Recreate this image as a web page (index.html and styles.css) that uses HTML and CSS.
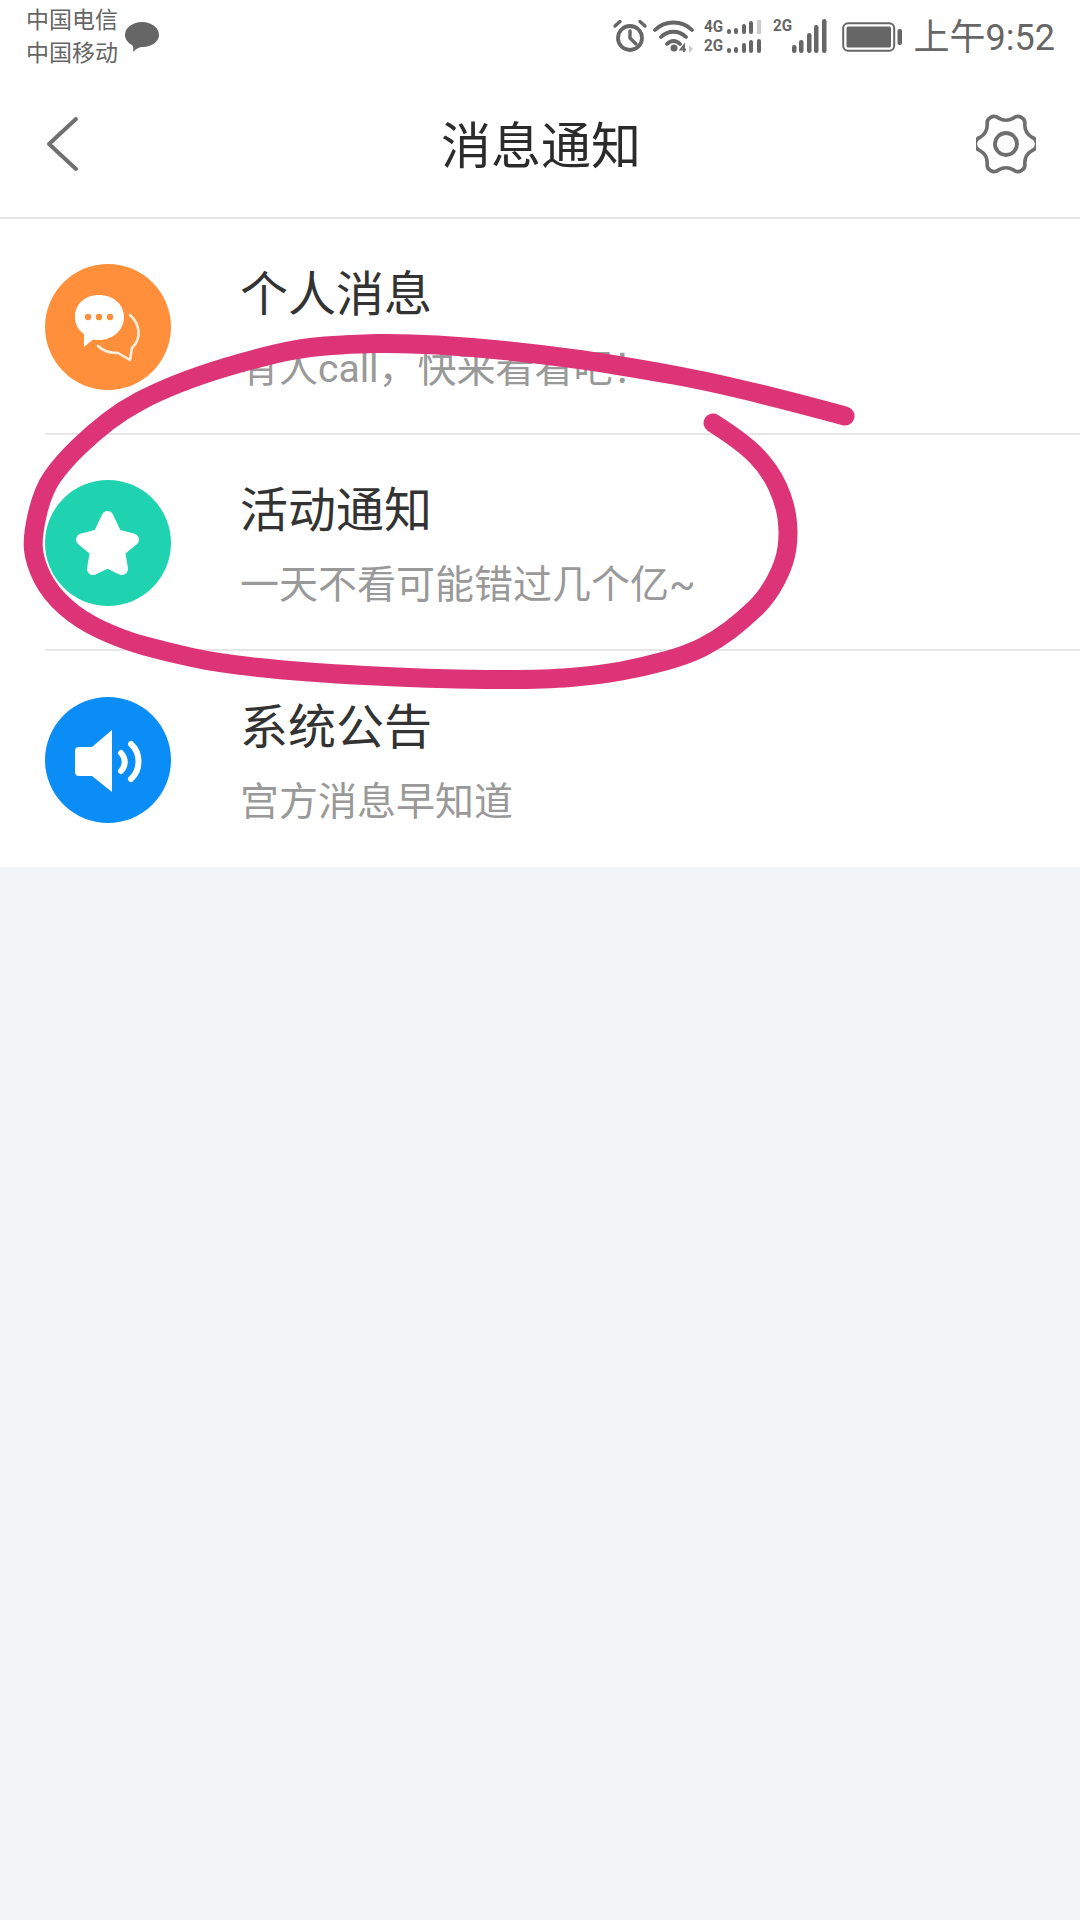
FILE: index.html
```html
<!DOCTYPE html>
<html lang="zh">
<head>
<meta charset="utf-8">
<title>消息通知</title>
<link rel="stylesheet" href="styles.css">
</head>
<body>
<div class="page">
  <header class="status">
    <div class="carrier">
      <div class="carrier-names"><div>中国电信</div><div>中国移动</div></div>
      <svg class="bubble" viewBox="0 0 34 32"><path d="M17 1C26 1 34 6.500 34 14C34 21 26 26 18 26C15 26 12 27 8 31C8.500 27 8.500 25 7 24C3 22 0 18 0 14C0 6.500 8 1 17 1Z"/></svg>
    </div>
    <div class="indicators">
      <svg class="alarm" viewBox="0 0 36 36"><circle cx="18" cy="19" r="12" fill="none" stroke="#666" stroke-width="3.800"/><path d="M18 12V19L24 25M3 7L8 2.500M33 7L28 2.500" fill="none" stroke="#666" stroke-width="3.400" stroke-linecap="round"/></svg>
      <svg class="wifi" viewBox="0 0 42 36"><path d="M2 11C12 1 29 1 39 11M8 18C15 11 26 11 33 18M14 25C18 21 23 21 27 25" fill="none" stroke="#666" stroke-width="3.800" stroke-linecap="round"/><circle cx="21" cy="29" r="3.500" fill="#666"/><path d="M31 33V26L27.500 30.500H33" fill="none" stroke="#666" stroke-width="1.800"/><path d="M36 26L40 30H36ZM36 34L40 30H36Z" fill="#ccc"/></svg>
      <div class="sim-dual">
        <div class="sim-row"><span class="net">4G</span><svg class="bars" viewBox="0 0 36 14"><rect x="1" y="9" width="4" height="5" rx="2" fill="#666"/><rect x="8" y="8" width="4" height="6" rx="2" fill="#666"/><rect x="16" y="4" width="4" height="10" rx="2" fill="#666"/><rect x="23" y="1" width="4" height="13" rx="2" fill="#666"/><rect x="31" y="0" width="4" height="14" fill="#ccc"/></svg></div>
        <div class="sim-row"><span class="net">2G</span><svg class="bars" viewBox="0 0 36 14"><rect x="1" y="9" width="4" height="5" rx="2" fill="#666"/><rect x="8" y="8" width="4" height="6" rx="2" fill="#666"/><rect x="16" y="4" width="4" height="10" rx="2" fill="#666"/><rect x="23" y="1" width="4" height="13" rx="2" fill="#666"/><rect x="31" y="0" width="4" height="14" rx="2" fill="#666"/></svg></div>
      </div>
      <div class="sim-single"><span class="net">2G</span><svg class="bars-big" viewBox="0 0 36 34"><rect x="0" y="26" width="4.500" height="8" rx="2.200" fill="#666"/><rect x="7" y="21" width="4.500" height="13" rx="2.200" fill="#666"/><rect x="15" y="14" width="4.500" height="20" rx="2.200" fill="#666"/><rect x="22" y="6" width="4.500" height="28" rx="2.200" fill="#666"/><rect x="30" y="0" width="4.500" height="34" rx="2.200" fill="#666"/></svg></div>
      <svg class="battery" viewBox="0 0 61 30"><rect x="1.200" y="1.200" width="51" height="27.600" rx="5" fill="none" stroke="#666" stroke-width="2"/><rect x="4.500" y="4.500" width="44.500" height="21" rx="1.500" fill="#666"/><rect x="55.500" y="7" width="4.500" height="16" rx="2" fill="#666"/></svg>
      <span class="time">上午9:52</span>
    </div>
  </header>

  <nav class="nav">
    <svg class="back" viewBox="0 0 34 56"><path d="M30 3L3 28L30 53" fill="none" stroke="#707070" stroke-width="4" stroke-linecap="round" stroke-linejoin="round"/></svg>
    <h1 class="nav-title">消息通知</h1>
    <svg class="gear" viewBox="0 0 60 60"><path d="M56.200 23.500A7 7 0 0 1 56.200 36.500Q48.600 40.750 48.800 49.400A7 7 0 0 1 37.400 55.900Q30 51.500 22.600 55.900A7 7 0 0 1 11.200 49.400Q11.400 40.750 3.800 36.500A7 7 0 0 1 3.800 23.500Q11.400 19.250 11.200 10.600A7 7 0 0 1 22.600 4.100Q30 8.500 37.400 4.100A7 7 0 0 1 48.800 10.600Q48.600 19.250 56.200 23.500Z" fill="none" stroke="#6e6e6e" stroke-width="3.600" stroke-linejoin="round"/><circle cx="30" cy="30" r="11" fill="none" stroke="#6e6e6e" stroke-width="3.800"/></svg>
  </nav>

  <main class="list">
    <section class="row">
      <svg class="avatar" viewBox="0 0 126 126"><circle cx="63" cy="63" r="63" fill="#ff8f3a"/><path d="M54 31C68 31 79 40 79 53C79 66 68 76 54 76C52 76 50 76 48 75.500L39 83L39 70C33 66 30 60 30 53C30 40 40 31 54 31Z" fill="#fff"/><circle cx="43" cy="53" r="3.200" fill="#ff8f3a"/><circle cx="54" cy="53" r="3.200" fill="#ff8f3a"/><circle cx="65" cy="53" r="3.200" fill="#ff8f3a"/><path d="M85 51C95 60 97 74 87 84L85 96L73 89C66 89 58 87 53 82" fill="none" stroke="#ffeedd" stroke-width="2.600" stroke-linecap="round" stroke-linejoin="round"/></svg>
      <div class="row-text"><div class="row-title">个人消息</div><div class="row-sub">有人call，快来看看吧！</div></div>
    </section>
    <section class="row">
      <svg class="avatar" viewBox="0 0 126 126"><circle cx="63" cy="63" r="63" fill="#1fd3b0"/><path d="M62.500 37L71 55L88 59.500L74 71L77 89L62.500 82L48 89L51 71L37 59.500L54 55Z" fill="#fff" stroke="#fff" stroke-width="12" stroke-linejoin="round"/></svg>
      <div class="row-text"><div class="row-title">活动通知</div><div class="row-sub">一天不看可能错过几个亿~</div></div>
    </section>
    <section class="row">
      <svg class="avatar" viewBox="0 0 126 126"><circle cx="63" cy="63" r="63" fill="#0a8df7"/><path d="M34 50H47L67 33V95L47 79H34A4 4 0 0 1 30 75V54A4 4 0 0 1 34 50Z" fill="#fff"/><path d="M76 56C81 61 81 69 76 74M86 47C96 56 96 73 86 82" fill="none" stroke="#fff" stroke-width="6" stroke-linecap="round"/></svg>
      <div class="row-text"><div class="row-title">系统公告</div><div class="row-sub">宫方消息早知道</div></div>
    </section>
  </main>

  <svg class="scribble" viewBox="0 0 1080 1920"><path d="M845 416Q735 386 673.500 375Q612 364 575.500 359Q539 354 504.500 350.500Q470 347 437 345Q404 343 377 343.500Q350 344 325 346Q300 348 275 354Q250 360 225 367.500Q200 375 178.500 383.500Q157 392 140 401Q123 410 108 421.500Q93 433 78 447.500Q63 462 53 476Q43 490 37.500 513.500Q32 537 33.500 550Q35 563 42.500 578Q50 593 65 606.500Q80 620 101.500 630Q123 640 145 646Q167 652 192 657.500Q217 663 258.500 667.500Q300 672 365 675.500Q430 679 485 679.500Q540 680 570 677.500Q600 675 621.500 671Q643 667 665 661Q687 655 702 647.500Q717 640 730 630Q743 620 755 608.500Q767 597 776 580Q785 563 787 548Q789 533 787 518Q785 503 777.500 486.500Q770 470 756.500 456Q743 442 713 423" fill="none" stroke="#dd3377" stroke-width="19" stroke-linecap="round" stroke-linejoin="round"/></svg>
</div>
</body>
</html>
```
FILE: styles.css
```css
* { box-sizing: border-box; }
html, body { margin: 0; padding: 0; }
body { background: #f3f4f6; font-family: Roboto, "Noto Sans CJK SC", sans-serif; }
.page { position: relative; width: 1080px; height: 1920px; overflow: hidden; }

.status { height: 74px; background: #fff; display: flex; justify-content: space-between; align-items: flex-start; padding: 4px 25px 0 26px; }
.carrier { display: flex; align-items: center; gap: 7px; color: #666; font-size: 23px; line-height: 33px; }
.bubble { width: 34px; height: 32px; fill: #666; }
.indicators { display: flex; align-items: center; height: 66px; }
.alarm { width: 36px; height: 36px; margin-right: 5px; }
.wifi { width: 42px; height: 36px; margin-right: 9px; }
.sim-dual { width: 58px; display: flex; flex-direction: column; gap: 5px; margin: 0 11px 2px 0; }
.sim-row { display: flex; align-items: flex-end; justify-content: space-between; height: 14px; }
.net { display: inline-block; width: 19px; color: #666; font-size: 16px; line-height: 14px; font-weight: 700; transform: scaleX(.95); transform-origin: left center; white-space: nowrap; }
.bars { width: 36px; height: 14px; }
.sim-single { display: flex; align-items: flex-start; height: 34px; margin: 0 14px 2px 0; }
.bars-big { width: 36px; height: 34px; }
.battery { width: 61px; height: 30px; margin-right: 11px; }
.time { color: #666; font-size: 36px; line-height: 40px; margin-top: 1px; }

.nav { height: 145px; background: #fff; border-bottom: 2px solid #e4e4e4; display: grid; grid-template-columns: 1fr auto 1fr; align-items: center; padding: 0 44px 4px 46px; }
.back { width: 34px; height: 56px; }
.nav-title { margin: 6px 0 0; color: #2b2b2b; font-size: 50px; font-weight: 400; line-height: 60px; }
.gear { width: 60px; height: 60px; justify-self: end; }

.list { background: #fff; padding-left: 45px; height: 648px; }
.row { height: 216px; padding-top: 2px; display: flex; align-items: center; gap: 69px; border-bottom: 2px solid #e6e6e6; }
.row:last-child { border-bottom: 0; }
.avatar { width: 126px; height: 126px; flex: none; }
.row-text { display: flex; flex-direction: column; gap: 19px; margin-top: 5px; }
.row-title { color: #333; font-size: 48px; line-height: 60px; }
.row-sub { color: #999; font-size: 39px; line-height: 50px; }

.scribble { position: absolute; left: 0; top: 0; width: 1080px; height: 1920px; pointer-events: none; }
```
